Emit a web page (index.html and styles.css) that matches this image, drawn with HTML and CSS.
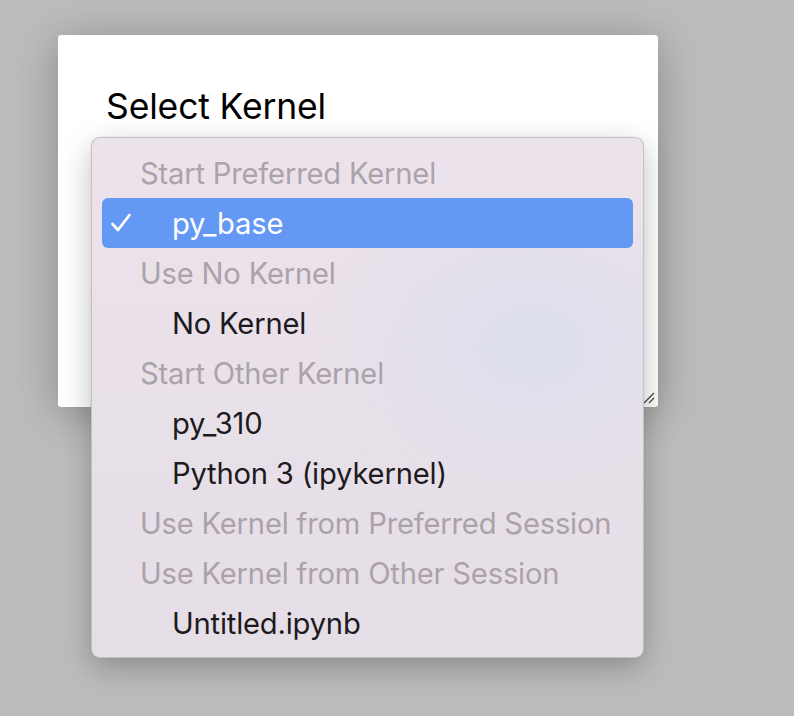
FILE: index.html
```html
<!DOCTYPE html>
<html>
<head>
<meta charset="utf-8">
<link rel="stylesheet" href="styles.css">
</head>
<body>
<div class="stage">
  <div class="dialog">
    <h1 class="title">Select Kernel</h1>
    <svg class="grip" width="14" height="14" viewBox="0 0 14 14">
      <path d="M2 12 L12 2 M7 12 L12 7" stroke="#444" stroke-width="1.2" fill="none"/>
    </svg>
  </div>
  <div class="menu">
    <div class="row header">Start Preferred Kernel</div>
    <div class="row item selected">
      <svg class="check" width="22" height="20" viewBox="0 0 22 20">
        <path d="M2.5 11 L8 17 L19.5 2" stroke="#fff" stroke-width="2.8" fill="none" stroke-linecap="round" stroke-linejoin="round"/>
      </svg>
      <span>py_base</span>
    </div>
    <div class="row header">Use No Kernel</div>
    <div class="row item"><span>No Kernel</span></div>
    <div class="row header">Start Other Kernel</div>
    <div class="row item"><span>py_310</span></div>
    <div class="row item"><span>Python 3 (ipykernel)</span></div>
    <div class="row header">Use Kernel from Preferred Session</div>
    <div class="row header">Use Kernel from Other Session</div>
    <div class="row item"><span>Untitled.ipynb</span></div>
  </div>
</div>
</body>
</html>
```

FILE: styles.css
```css
html, body {
  margin: 0;
  padding: 0;
  background: #bcbcbc;
  width: 794px;
  height: 716px;
  overflow: hidden;
  font-family: Inter, "Noto Sans", "Liberation Sans", sans-serif;
}
.stage {
  position: relative;
  width: 794px;
  height: 716px;
  box-sizing: border-box;
  padding: 35px 0 0 58px;
}
.dialog {
  position: relative;
  width: 600px;
  height: 372px;
  background: #ffffff;
  border-radius: 3px;
  box-shadow: 0 6px 44px rgba(0,0,0,0.28);
  box-sizing: border-box;
  padding: 52px 0 0 48px;
}
.title {
  margin: 0;
  font-size: 35.5px;
  font-weight: 400;
  color: #000;
  line-height: 40px;
  letter-spacing: -0.15px;
}
.grip {
  position: absolute;
  right: 2px;
  bottom: 2px;
}
.menu {
  position: absolute;
  left: 91px;
  top: 137px;
  width: 553px;
  height: 521px;
  box-sizing: border-box;
  padding: 10px 10px 10px 10px;
  border-radius: 9px;
  border: 1px solid rgba(0,0,0,0.14);
  background:
    radial-gradient(ellipse 220px 170px at 440px 205px, rgba(216,222,238,0.75), rgba(216,222,238,0) 100%),
    linear-gradient(180deg, #ece2eb 0%, #e8e0e8 60%, #e5dee6 100%);
  box-shadow: 0 10px 30px rgba(0,0,0,0.25), 0 0 1px rgba(0,0,0,0.3);
  display: flex;
  flex-direction: column;
}
.row {
  height: 50px;
  flex: none;
  display: flex;
  align-items: center;
  font-size: 29.2px;
  letter-spacing: -0.2px;
  border-radius: 6px;
  position: relative;
}
.header {
  color: #aba2aa;
  padding-left: 38px;
}
.item {
  color: #1d1a1d;
  padding-left: 70px;
}
.selected {
  background: #6399f5;
  color: #ffffff;
}
.check {
  position: absolute;
  left: 8px;
  top: 15px;
}
```
